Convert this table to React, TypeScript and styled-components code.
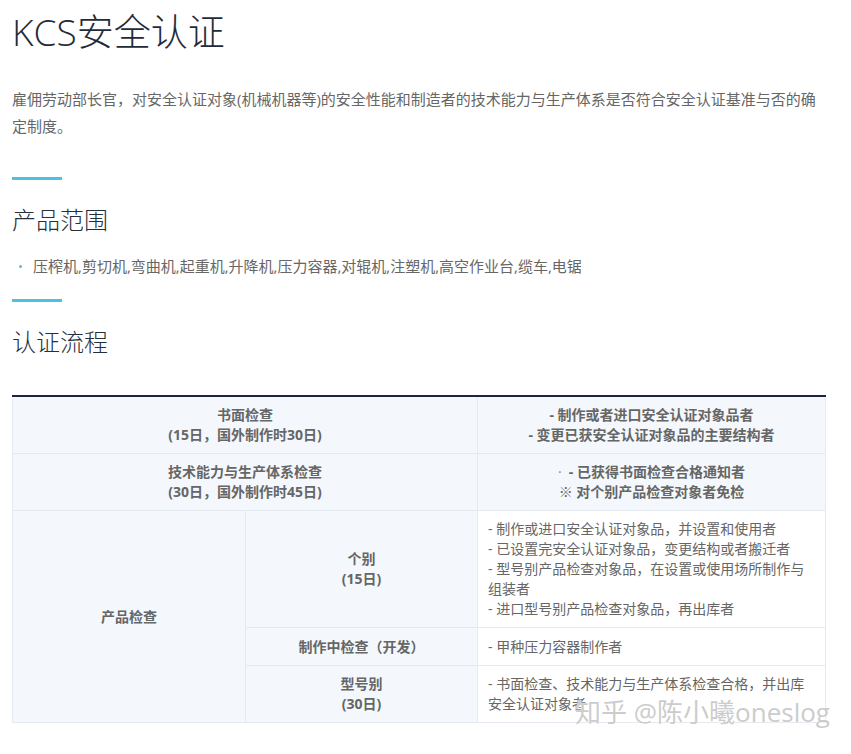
import styled, { createGlobalStyle } from 'styled-components';

const GlobalStyle = createGlobalStyle`
  body {
    margin: 0;
    background: #fff;
    font-family: 'Open Sans', 'Noto Sans CJK SC', sans-serif;
  }
`;

const Page = styled.main`
  position: relative;
  width: 813px;
  padding: 9px 0 30px 12px;
`;

const Title = styled.h1`
  margin: 0;
  font-size: 37px;
  line-height: 46px;
  font-weight: 300;
  color: #1f2b3a;
`;

const Lead = styled.p`
  margin: 31px 0 0;
  font-size: 15px;
  line-height: 27px;
  color: #666;
`;

const Accent = styled.div<{ $gap: number }>`
  width: 50px;
  height: 3px;
  margin-top: ${(p) => p.$gap}px;
  background: #4cc1e0;
`;

const SectionTitle = styled.h2`
  margin: 23px 0 0;
  font-size: 24px;
  line-height: 34px;
  font-weight: 300;
  color: #26303c;
`;

const ScopeList = styled.ul`
  margin: 16px 0 0;
  padding: 0;
  list-style: none;
`;

const ScopeItem = styled.li`
  position: relative;
  padding-left: 21px;
  font-size: 15px;
  line-height: 27px;
  color: #666;

  &::before {
    content: '';
    position: absolute;
    left: 7px;
    top: 12px;
    width: 3px;
    height: 3px;
    border-radius: 50%;
    background: #4cc1e0;
  }
`;

const Table = styled.table`
  margin-top: 36px;
  width: 813px;
  border-collapse: collapse;
  table-layout: fixed;
  border-top: 2px solid #1b2442;
  font-size: 14px;
  line-height: 20px;
  color: #666;
`;

const Cell = styled.td<{ $tone?: 'head' | 'body'; $align?: 'left' | 'center' }>`
  padding: 8px 10px;
  border: 1px solid #e5eaf0;
  border-top: none;
  background: ${(p) => (p.$tone === 'body' ? '#fff' : '#f4f8fc')};
  text-align: ${(p) => p.$align ?? 'center'};
  font-weight: ${(p) => (p.$tone === 'body' ? 400 : 700)};
  vertical-align: middle;
`;

const ShortRow = styled.tr`
  height: 38px;
`;

const Dot = styled.span`
  margin-right: 7px;
  font-weight: 400;
  color: #888;
`;

const Watermark = styled.div`
  position: absolute;
  right: -5px;
  top: 695px;
  font-size: 26px;
  line-height: 34px;
  color: rgba(190, 190, 190, 0.8);
  text-shadow: 0 0 2px #fff, 0 0 1px #fff;
  pointer-events: none;
`;

const scope =
  '压榨机,剪切机,弯曲机,起重机,升降机,压力容器,对辊机,注塑机,高空作业台,缆车,电锯';

export default function App() {
  return (
    <>
      <GlobalStyle />
      <Page>
        <Title>KCS安全认证</Title>
        <Lead>
          雇佣劳动部长官，对安全认证对象(机械机器等)的安全性能和制造者的技术能力与生产体系是否符合安全认证基准与否的确定制度。
        </Lead>

        <Accent $gap={37} />
        <SectionTitle>产品范围</SectionTitle>
        <ScopeList>
          <ScopeItem>{scope}</ScopeItem>
        </ScopeList>

        <Accent $gap={19} />
        <SectionTitle>认证流程</SectionTitle>

        <Table>
          <colgroup>
            <col style={{ width: 233 }} />
            <col style={{ width: 232 }} />
            <col style={{ width: 348 }} />
          </colgroup>
          <tbody>
            <tr>
              <Cell colSpan={2}>
                书面检查
                <br />
                (15日，国外制作时30日)
              </Cell>
              <Cell>
                - 制作或者进口安全认证对象品者
                <br />- 变更已获安全认证对象品的主要结构者
              </Cell>
            </tr>
            <tr>
              <Cell colSpan={2}>
                技术能力与生产体系检查
                <br />
                (30日，国外制作时45日)
              </Cell>
              <Cell>
                <Dot>·</Dot>- 已获得书面检查合格通知者
                <br />※ 对个别产品检查对象者免检
              </Cell>
            </tr>
            <tr>
              <Cell rowSpan={3}>产品检查</Cell>
              <Cell>
                个别
                <br />
                (15日)
              </Cell>
              <Cell $tone="body" $align="left">
                - 制作或进口安全认证对象品，并设置和使用者
                <br />- 已设置完安全认证对象品，变更结构或者搬迁者
                <br />- 型号别产品检查对象品，在设置或使用场所制作与组装者
                <br />- 进口型号别产品检查对象品，再出库者
              </Cell>
            </tr>
            <ShortRow>
              <Cell>制作中检查（开发）</Cell>
              <Cell $tone="body" $align="left">
                - 甲种压力容器制作者
              </Cell>
            </ShortRow>
            <tr>
              <Cell>
                型号别
                <br />
                (30日)
              </Cell>
              <Cell $tone="body" $align="left">
                - 书面检查、技术能力与生产体系检查合格，并出库安全认证对象者
              </Cell>
            </tr>
          </tbody>
        </Table>

        <Watermark>知乎 @陈小曦oneslog</Watermark>
      </Page>
    </>
  );
}
